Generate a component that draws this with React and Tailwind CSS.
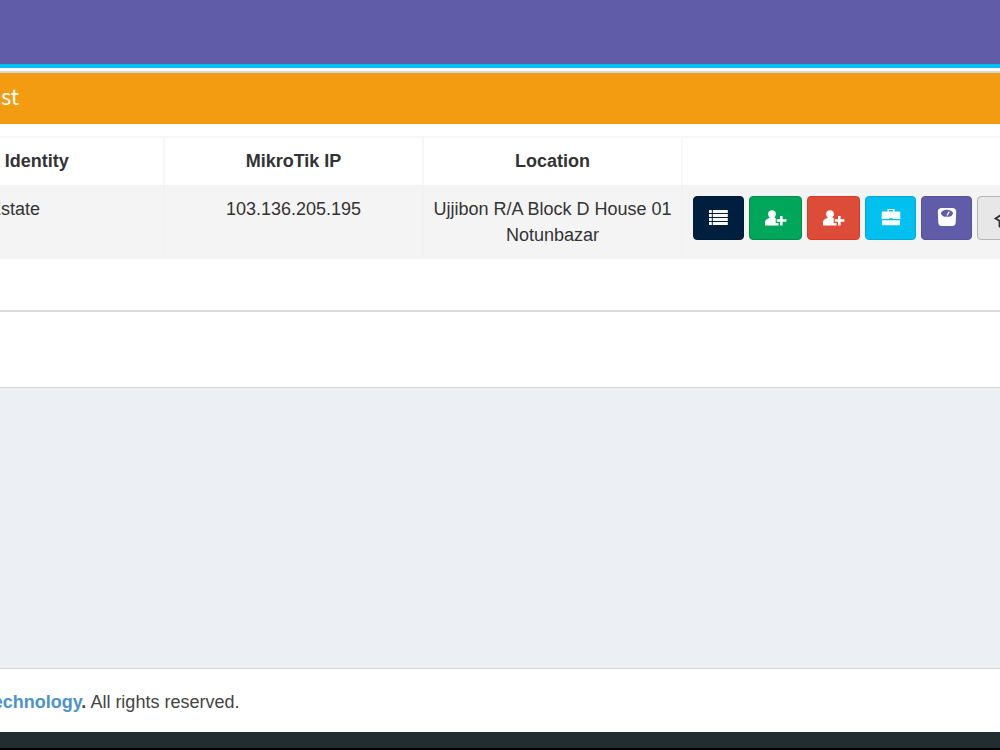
const ListIcon = () => (
  <svg viewBox="0 0 20 16" className="w-5 h-4" fill="currentColor">
    <path d="M0 0h2.800v2.900H0zM0 4h2.800v2.900H0zM0 8h2.800v2.900H0zM0 12h2.800v2.900H0zM3.800 0h15v2.900h-15zM3.800 4h15v2.900h-15zM3.800 8h15v2.900h-15zM3.800 12h15v2.900h-15z" />
  </svg>
);

const PersonAddIcon = () => (
  <svg viewBox="0 0 22 18" className="w-[22px] h-[18px]" fill="currentColor">
    <path d="M7 1.200c2.400 0 3.900 1.600 3.900 3.900 0 1.400-.7 2.700-1.700 3.400l1.500.6v4.900h2.800v2.600H-.2c0-3.600.3-5.400 2-6.300l3-1.600C3.700 7.900 3.100 6.500 3.100 5.100 3.100 2.800 4.600 1.200 7 1.200z" />
    <path d="M15 7h2.600v3.200h3.800v2.500h-3.800v3.800H15v-3.800h-3.300v-2.500H15z" />
  </svg>
);

const BriefcaseIcon = () => (
  <svg viewBox="0 1 20 18" className="w-5 h-[18px]" fill="currentColor">
    <path d="M6.500 3.500V1.700c0-.7.5-1.200 1.200-1.200h4.600c.7 0 1.200.5 1.200 1.200v1.800H18c.8 0 1.300.5 1.300 1.300V11H12v-.8H8v.8H.7V4.800C.7 4 1.200 3.500 2 3.500zM8 3.500h4V2H8z" />
    <path d="M1 12.200h18v4c0 .6-.4 1-1 1H2c-.6 0-1-.4-1-1z" />
  </svg>
);

const ScaleIcon = () => (
  <svg viewBox="0 2 20 20" className="w-5 h-5">
    <path
      fill="currentColor"
      d="M5 2h10c2.800 0 4.300 1.300 4.200 4l-.5 10.500c-.1 2.400-1.400 3.500-3.600 3.500H4.900c-2.200 0-3.500-1.100-3.600-3.500L.8 6C.7 3.300 2.200 2 5 2z"
    />
    <path
      fill="#605ca8"
      d="M10 3.800c3.100 0 5.400 1.300 6.200 3.400-1 2.300-2.700 3.600-4.100 3.600-.8 0-1.300-.3-2.100-.3s-1.300.3-2.100.3c-1.400 0-3.100-1.300-4.100-3.600C4.600 5.100 6.900 3.800 10 3.800z"
    />
    <path stroke="currentColor" strokeWidth="1.300" d="M10 9.300l2.300-3.600" />
  </svg>
);

const CapIcon = () => (
  <svg viewBox="0 0 26 20" className="w-[26px] h-5" fill="none" stroke="currentColor" strokeWidth="1.800">
    <path d="M1.500 10.500L13 3l11.500 7.500L13 17z" />
    <path d="M5.500 12v6.500c3.500 2 11.500 2 15 0V12" />
  </svg>
);

const actions = [
  { label: 'View list', Icon: ListIcon, style: 'w-[51px] bg-[#001f3f] border-[#001a35] text-white' },
  { label: 'Add user', Icon: PersonAddIcon, style: 'w-[53px] bg-[#00a65a] border-[#008d4c] text-white' },
  { label: 'Add blocked user', Icon: PersonAddIcon, style: 'w-[53px] bg-[#dd4b39] border-[#d73925] text-white' },
  { label: 'Packages', Icon: BriefcaseIcon, style: 'w-[51px] bg-[#00c0ef] border-[#00acd6] text-white' },
  { label: 'Usage', Icon: ScaleIcon, style: 'w-[51px] bg-[#605ca8] border-[#555299] text-white' },
  { label: 'Graduate', Icon: CapIcon, style: 'w-[60px] bg-[#e7e7e7] border-[#b5b5b5] text-[#333]' },
];

const routers = [
  {
    identity: 'Estate',
    ip: '103.136.205.195',
    location: 'Ujjibon R/A Block D House 01 Notunbazar',
  },
];

export default function App() {
  return (
    <div className="flex min-h-screen flex-col overflow-hidden bg-[#ecf0f5] font-['Liberation_Sans',Arial,sans-serif] text-lg leading-[26px] text-[#333]">
      <header className="h-17 border-b-4 border-[#00c0ef] bg-[#605ca8]" />

      {/* the content starts under the left edge of the window */}
      <main className="-ml-[168px] grow">
        <section className="border-b border-[#d2d6de] bg-white pt-[3px] pb-[75px]">
          <div className="border-t-2 border-b-2 border-t-[#d2d6de] border-b-[#d8dade] pb-[51px]">
            <div className="bg-[#f39c12] pt-[9px] pb-[15px] pl-[151px] text-white">
              <h3 className="font-['Noto_Sans_CJK_SC','Noto_Sans',sans-serif] text-[22px] leading-[27px]">List</h3>
            </div>

            <table className="mt-3 w-[1300px] table-fixed border-separate border-spacing-0 border-t-2 border-[#f7f7f7] text-center">
              <thead>
                <tr className="h-[47px]">
                  <th className="w-[333px] border-r-2 border-[#f7f7f7] pb-[2px] font-bold">MikroTik Identity</th>
                  <th className="w-[259px] border-r-2 border-[#f7f7f7] pb-[2px] font-bold">MikroTik IP</th>
                  <th className="w-[259px] border-r-2 border-[#f7f7f7] pb-[2px] font-bold">Location</th>
                  <th aria-label="Actions" />
                </tr>
              </thead>
              <tbody>
                {routers.map((router) => (
                  <tr key={router.ip} className="bg-[#f4f4f4] align-top">
                    <td className="border-r-2 border-[#f2f2f2] py-[11px] pr-[123px] text-right">{router.identity}</td>
                    <td className="border-r-2 border-[#f2f2f2] py-[11px]">{router.ip}</td>
                    <td className="border-r-2 border-[#f2f2f2] px-2 py-[11px]">{router.location}</td>
                    <td className="py-[11px] pl-[10px]">
                      <div className="flex gap-[5px]">
                        {actions.map(({ label, Icon, style }) => (
                          <button
                            key={label}
                            type="button"
                            aria-label={label}
                            className={`flex h-11 shrink-0 items-center justify-center rounded-[4px] border ${style}`}
                          >
                            <Icon />
                          </button>
                        ))}
                      </div>
                    </td>
                  </tr>
                ))}
              </tbody>
            </table>
          </div>
        </section>
      </main>

      <footer className="-ml-[168px] border-t border-[#d2d6de] bg-white pt-5 pb-[17px] pl-[151px] text-[#444]">
        <strong>
          <a href="#" className="text-[#4c94c6]">Technology</a>.
        </strong>{' '}
        All rights reserved.
      </footer>
      <div className="h-[18px] border-b-2 border-black bg-[#222d32]" />
    </div>
  );
}
